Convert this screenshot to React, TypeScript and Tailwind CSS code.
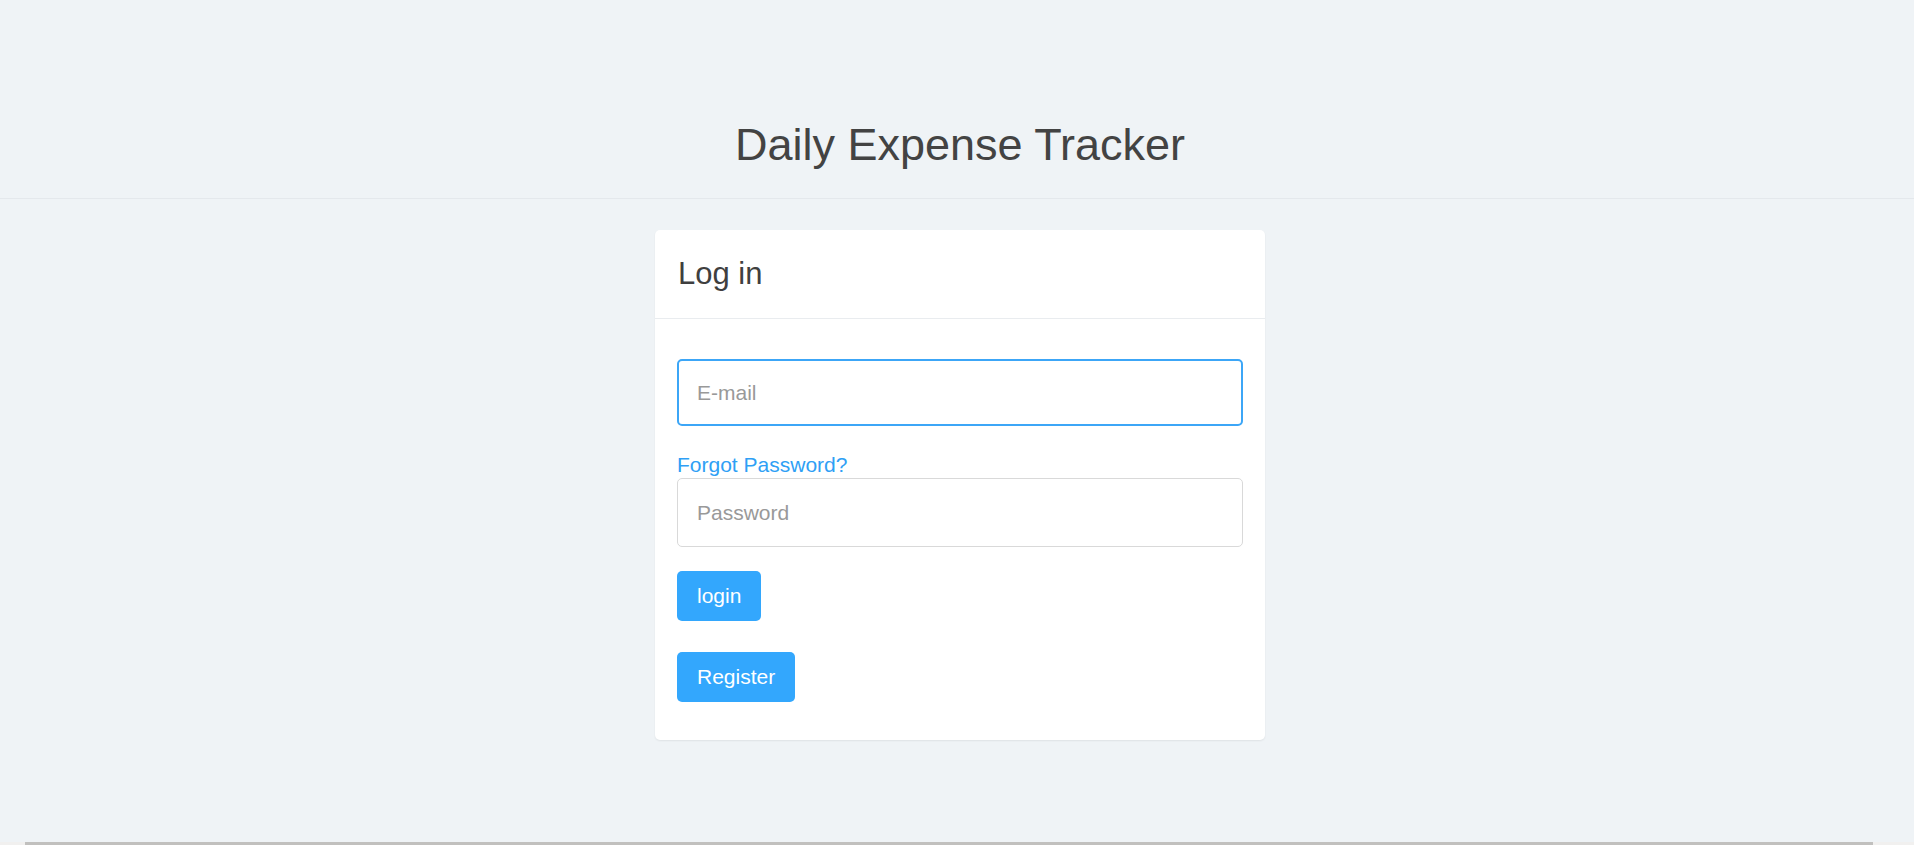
export default function App() {
  return (
    <div
      className="flex h-[845px] w-full flex-col overflow-hidden bg-[#eff3f6] text-[#444444]"
      style={{ fontFamily: '"Liberation Sans", Arial, sans-serif' }}
    >
      <header className="flex h-[199px] shrink-0 items-end justify-center border-b border-[#e4e8ec] pb-[28px] pl-[6px]">
        <h1 className="text-[45px] leading-[50px] font-normal text-[#434343]">Daily Expense Tracker</h1>
      </header>

      <main className="flex flex-1 justify-center pl-[6px] pt-[31px]">
        <div className="flex h-fit w-[610px] flex-col rounded-[5px] bg-white shadow-[0_1px_2px_rgba(0,0,0,0.07)]">
          <div className="flex h-[89px] items-center border-b border-[#e9ecef] px-[23px]">
            <h2 className="text-[31px] leading-[36px] font-normal text-[#3f3f3f]">Log in</h2>
          </div>
          <form className="flex flex-col px-[22px] pt-[40px] pb-[38px]" onSubmit={(e) => e.preventDefault()}>
            <input
              type="email"
              placeholder="E-mail"
              className="h-[67px] w-full rounded-[5px] border-2 border-[#3ca6f7] px-[18px] text-[21px] text-[#444] outline-none placeholder:text-[#999999]"
            />
            <a href="#" className="mt-[26px] block h-[26px] text-[21px] leading-[26px] text-[#2f9ff5]">
              Forgot Password?
            </a>
            <input
              type="password"
              placeholder="Password"
              className="h-[69px] w-full rounded-[5px] border border-[#d9d9d9] px-[19px] text-[21px] text-[#444] outline-none placeholder:text-[#999999]"
            />
            <div className="mt-[24px] flex">
              <button
                type="submit"
                className="h-[50px] rounded-[5px] bg-[#33a7fd] px-[20px] text-[21px] text-white"
              >
                login
              </button>
            </div>
            <div className="mt-[31px] flex">
              <button
                type="button"
                className="h-[50px] rounded-[5px] bg-[#33a7fd] px-[20px] text-[21px] text-white"
              >
                Register
              </button>
            </div>
          </form>
        </div>
      </main>

      <div className="flex h-[3px] shrink-0">
        <div className="w-[25px] bg-[#f1f0ef]" />
        <div className="flex-1 bg-[#c1c0be]" />
        <div className="w-[41px] bg-[#f1f0ef]" />
      </div>
    </div>
  );
}
